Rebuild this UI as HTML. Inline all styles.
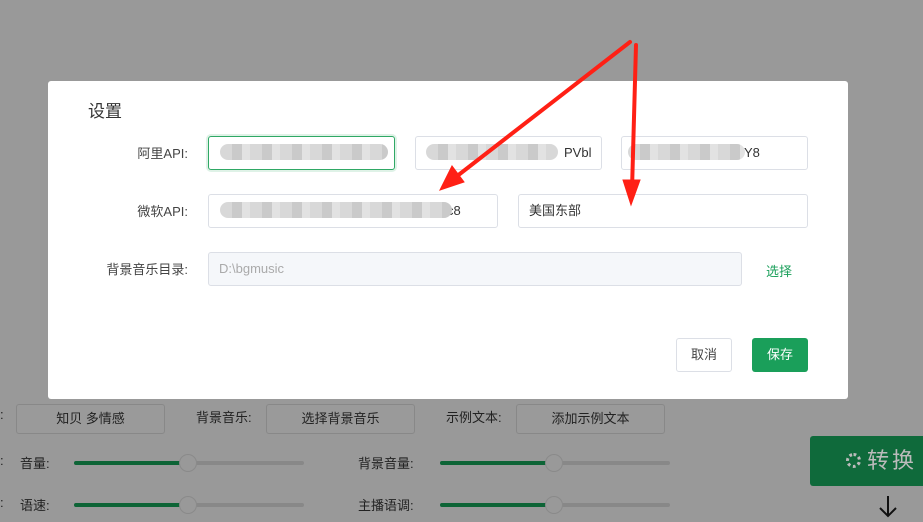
<!DOCTYPE html>
<html><head><meta charset="utf-8"><style>
*{margin:0;padding:0;box-sizing:border-box}
body{width:923px;height:522px;overflow:hidden;background:#999;position:relative;font-family:"Liberation Sans","Noto Sans CJK SC",sans-serif;font-size:13px;color:#333}
.a{position:absolute}
.btn{position:absolute;border:1px solid #888;border-radius:3px;background:#9a9a9a;color:#222;text-align:center;line-height:28px;font-size:13px}
.lbl{position:absolute;color:#222;font-size:13px}
.trk{position:absolute;height:4px;background:#888;border-radius:2px}
.fill{position:absolute;height:4px;background:#0d6436;border-radius:2px}
.knob{position:absolute;width:18px;height:18px;border-radius:50%;background:#999;border:1px solid #8a8a8a}
.dlg{position:absolute;left:48px;top:81px;width:800px;height:318px;background:#fff;border-radius:3px}
.in{position:absolute;border:1px solid #dcdfe6;border-radius:3px;background:#fff;height:34px;line-height:32px;padding-left:10px;font-size:13px;color:#333}
.blur{position:absolute;height:16px;border-radius:8px;background:repeating-linear-gradient(90deg,#d8d8d8 0 12px,#cacaca 12px 22px,#e2e2e2 22px 30px)}
.dl{position:absolute;font-size:13px;color:#444;text-align:right;width:110px}
</style></head><body>
<div class="lbl" style="left:0;top:407px">:</div>
<div class="btn" style="left:16px;top:404px;width:149px">知贝 多情感</div>
<div class="lbl" style="left:196px;top:407px">背景音乐:</div>
<div class="btn" style="left:266px;top:404px;width:149px">选择背景音乐</div>
<div class="lbl" style="left:446px;top:407px">示例文本:</div>
<div class="btn" style="left:516px;top:404px;width:149px">添加示例文本</div>
<div class="lbl" style="left:0;top:453px">:</div><div class="lbl" style="left:20px;top:453px">音量:</div>
<div class="trk" style="left:74px;top:461px;width:230px"></div><div class="fill" style="left:74px;top:461px;width:114px"></div><div class="knob" style="left:179px;top:454px"></div>
<div class="lbl" style="left:358px;top:453px">背景音量:</div>
<div class="trk" style="left:440px;top:461px;width:230px"></div><div class="fill" style="left:440px;top:461px;width:114px"></div><div class="knob" style="left:545px;top:454px"></div>
<div class="lbl" style="left:0;top:495px">:</div><div class="lbl" style="left:20px;top:495px">语速:</div>
<div class="trk" style="left:74px;top:503px;width:230px"></div><div class="fill" style="left:74px;top:503px;width:114px"></div><div class="knob" style="left:179px;top:496px"></div>
<div class="lbl" style="left:358px;top:495px">主播语调:</div>
<div class="trk" style="left:440px;top:503px;width:230px"></div><div class="fill" style="left:440px;top:503px;width:114px"></div><div class="knob" style="left:545px;top:496px"></div>
<div class="a" style="left:810px;top:436px;width:120px;height:50px;background:#0f6a3b;border-radius:3px;color:#bbb;font-size:22px;line-height:50px;padding-left:57px;letter-spacing:3px">转换</div>
<div class="a" style="left:846px;top:453px;width:15px;height:15px;border-radius:50%;border:3px dotted #bbb"></div>
<svg class="a" style="left:876px;top:494px" width="24" height="26"><g stroke="#111" stroke-width="2" fill="none"><line x1="12" y1="2" x2="12" y2="22"/><polyline points="4,14 12,22 20,14"/></g></svg>
<div class="dlg">
<div class="a" style="left:40px;top:16px;font-size:17px;color:#333">设置</div>
<div class="dl" style="left:30px;top:62px">阿里API:</div>
<div class="in" style="left:160px;top:55px;width:187px;border-color:#2fa865;box-shadow:0 0 0 2px #dff2e7"></div>
<div class="blur" style="left:172px;top:63px;width:168px"></div>
<div class="in" style="left:367px;top:55px;width:187px;padding-left:148px">PVbl</div>
<div class="blur" style="left:378px;top:63px;width:132px"></div>
<div class="in" style="left:573px;top:55px;width:187px;padding-left:122px">Y8</div>
<div class="blur" style="left:580px;top:63px;width:117px"></div>
<div class="dl" style="left:30px;top:120px">微软API:</div>
<div class="in" style="left:160px;top:113px;width:290px;padding-left:238px">c8</div>
<div class="blur" style="left:172px;top:121px;width:232px"></div>
<div class="in" style="left:470px;top:113px;width:290px">美国东部</div>
<div class="dl" style="left:30px;top:178px">背景音乐目录:</div>
<div class="in" style="left:160px;top:171px;width:534px;background:#f5f7fa;color:#aaa">D:\bgmusic</div>
<div class="a" style="left:718px;top:180px;color:#1a9f5a;font-size:13px">选择</div>
<div class="a" style="left:628px;top:257px;width:56px;height:34px;border:1px solid #dcdfe6;border-radius:3px;text-align:center;line-height:32px;color:#444">取消</div>
<div class="a" style="left:704px;top:257px;width:56px;height:34px;background:#1a9f5a;border-radius:3px;text-align:center;line-height:34px;color:#fff">保存</div>
</div>
<svg class="a" style="left:0;top:0" width="923" height="522">
<g stroke="#ff2015" stroke-width="4" fill="#ff2015" stroke-linecap="round">
<line x1="630" y1="42" x2="452" y2="180"/>
<polygon points="440,190 452,166 464,182" stroke-width="1"/>
<line x1="636" y1="45" x2="632" y2="190"/>
<polygon points="631,205 623,180 640,180" stroke-width="1"/>
</g></svg>
</body></html>
